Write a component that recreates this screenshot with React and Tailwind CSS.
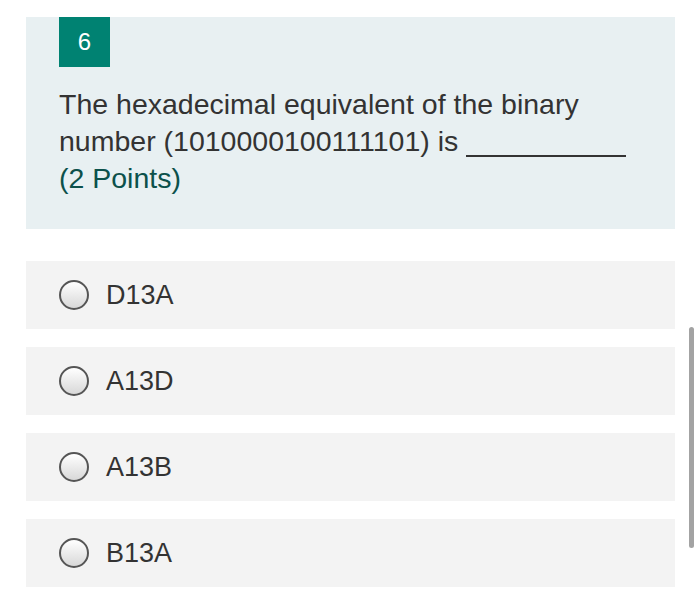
import React from 'react';

const options = ['D13A', 'A13D', 'A13B', 'B13A'];

const Radio = () => (
    <span className="inline-block w-[30px] h-[30px] rounded-full border-2 border-[#555] bg-gradient-to-b from-white to-[#d8d8d8] shrink-0" />
);

export default function App() {
    return (
        <div className="relative w-[700px] h-[610px] bg-white overflow-hidden" style={{ fontFamily: '"Liberation Sans", Arial, sans-serif' }}>
            <div className="pt-[17px] pl-[26px] w-[675px]">
                {/* Question */}
                <div className="bg-[#e8f0f2] h-[212px] pl-[33px] pr-4">
                    <div className="w-[51px] h-[50px] bg-[#008272] text-white text-[24px] flex items-center justify-center">
                        6
                    </div>
                    <div className="mt-[19px] text-[28.5px] leading-[37px] text-[#333] whitespace-nowrap">
                        <div>The hexadecimal equivalent of the binary</div>
                        <div>
                            number (1010000100111101) is{' '}
                            <span className="inline-block w-[160px] h-0 border-b-2 border-[#333] align-[-6px]" />
                        </div>
                        <div className="text-[#0c514b]">(2 Points)</div>
                    </div>
                </div>

                {/* Options */}
                <div className="mt-[32px] flex flex-col gap-[18px]">
                    {options.map((opt) => (
                        <div key={opt} className="h-[68px] bg-[#f3f3f3] flex items-center pl-[33px] gap-[17px]">
                            <Radio />
                            <span className="text-[27px] text-[#333]">{opt}</span>
                        </div>
                    ))}
                </div>
            </div>

            {/* Scrollbar */}
            <div className="absolute left-[689px] top-[327px] w-[5px] h-[221px] rounded-full bg-[#a3a3a3]" />
        </div>
    );
}
